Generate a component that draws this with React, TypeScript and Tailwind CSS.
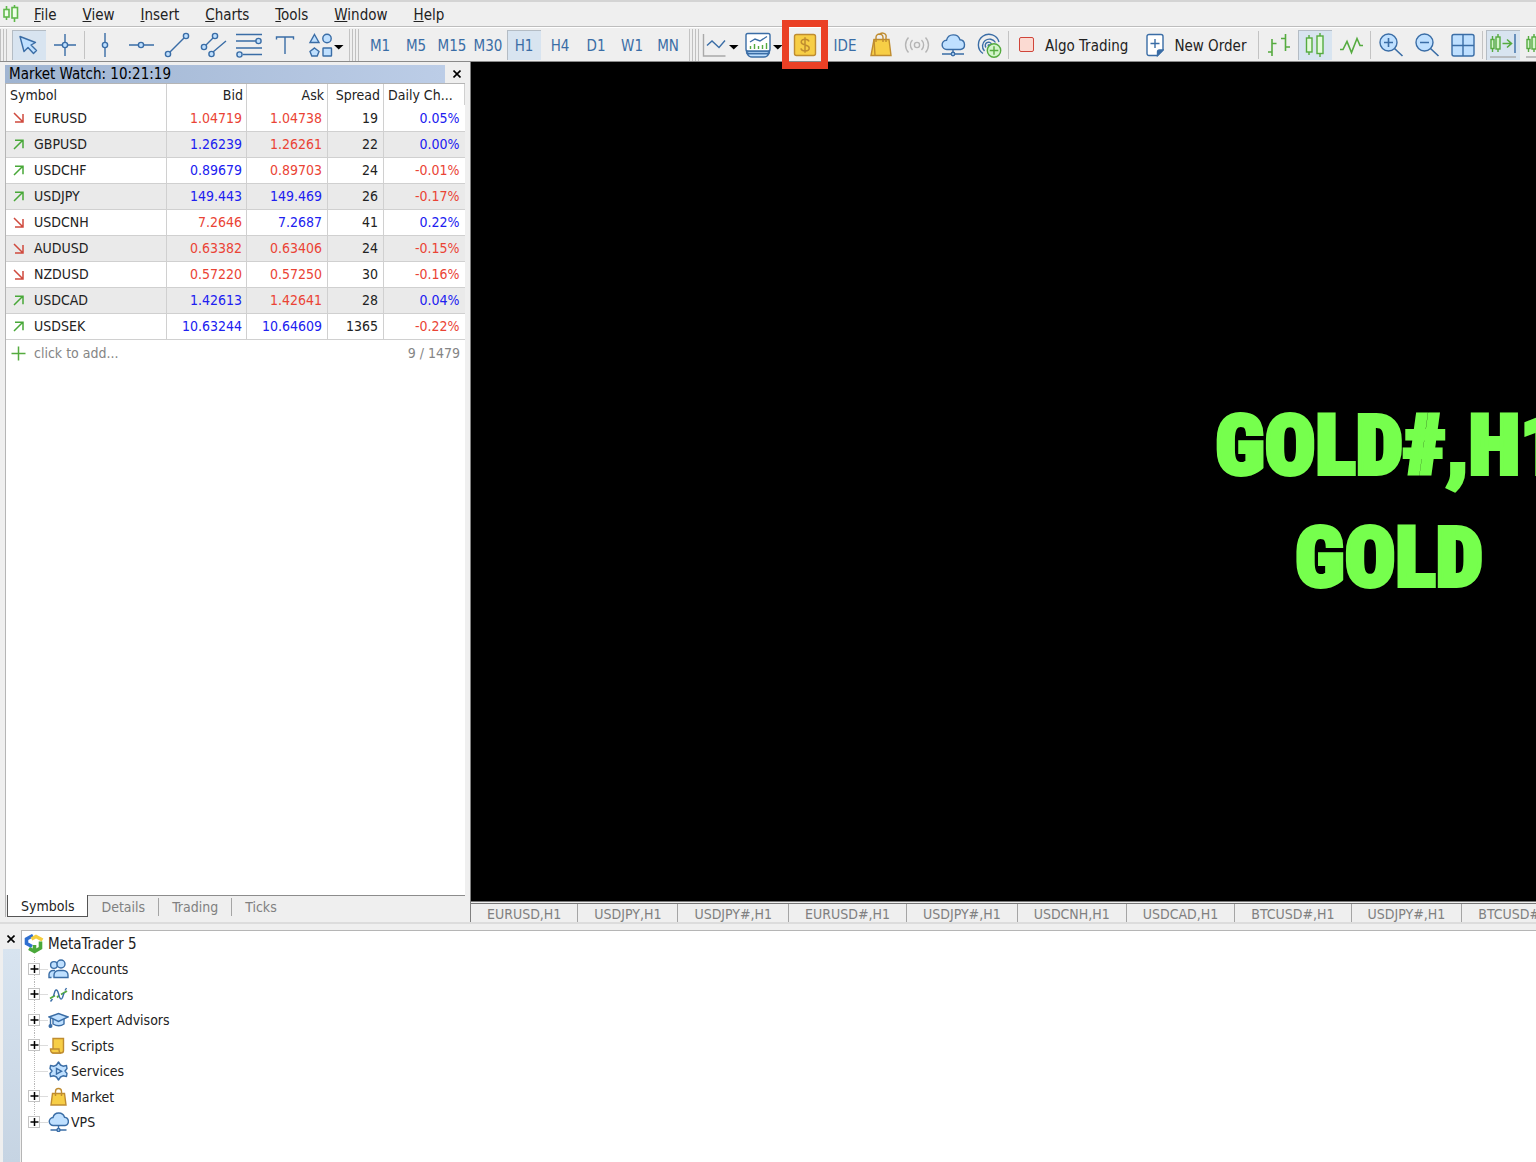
import { Fragment, type ReactNode } from "react";

const BLUE = "#3a6da6";
const SKY = "#bfe0ff";
const GREEN = "#55ab3f";
const MINT = "#d3f5cb";
const GOLD = "#f7ce46";
const BROWN = "#bf8c30";

function Glyph({ children, w = 34, h = 30, stroke = BLUE }: { children: ReactNode; w?: number; h?: number; stroke?: string }) {
  return (
    <svg width={w} height={h} viewBox={`0 0 ${w} ${h}`} fill="none" stroke={stroke} strokeWidth="1.4" className="block shrink-0" aria-hidden="true">
      {children}
    </svg>
  );
}

const Arrow = ({ x }: { x: number }) => <path d={`M${x} 15h9.500l-4.750 4.500z`} fill="#000" stroke="none" />;

function Tool({ label, active, children }: { label: string; active?: boolean; children: ReactNode }) {
  return (
    <button
      type="button"
      aria-label={label}
      className={
        active
          ? "flex h-[30px] min-w-[34px] shrink-0 items-center justify-center bg-[#d8e4f0] shadow-[inset_1px_1px_#b4bcc4]"
          : "flex h-[30px] min-w-[34px] shrink-0 items-center justify-center"
      }
    >
      {children}
    </button>
  );
}

const Sep = () => <span className="mr-px h-7 w-px shrink-0 bg-[#c3c3c3]" />;

const Grip = () => (
  <span className="flex h-8 shrink-0 gap-[2px]">
    <i className="w-px bg-[#c0c0c0]" />
    <i className="w-px bg-[#c0c0c0]" />
    <i className="w-px bg-[#c0c0c0]" />
  </span>
);

const Cursor = () => (
  <Glyph>
    <path d="M8 6.500 12 21.500 16 17.500 21.500 23.500 24.500 20.500 19 15 23.500 12.500Z" fill={SKY} strokeLinejoin="round" />
  </Glyph>
);
const Cross = () => (
  <Glyph>
    <path d="M17 4v8m0 6v8M6 15h8m6 0h8" />
    <circle cx="17" cy="15" r="2.600" fill={SKY} />
  </Glyph>
);
const VLine = () => (
  <Glyph>
    <path d="M17 3v9m0 6v9" />
    <circle cx="17" cy="15" r="2.600" fill={SKY} />
  </Glyph>
);
const HLine = () => (
  <Glyph>
    <path d="M5 15h9m6 0h10" />
    <circle cx="17" cy="15" r="2.600" fill={SKY} />
  </Glyph>
);
const Trend = () => (
  <Glyph>
    <path d="M10 22 24 8" />
    <circle cx="8" cy="24" r="2.600" fill={SKY} />
    <circle cx="26" cy="6" r="2.600" fill={SKY} />
  </Glyph>
);
const Channel = () => (
  <Glyph>
    <path d="M10 15 17 8M17 22 30 11" />
    <circle cx="8" cy="17" r="2.600" fill={SKY} />
    <circle cx="19" cy="6" r="2.600" fill={SKY} />
    <circle cx="15.500" cy="24" r="2.600" fill={SKY} />
  </Glyph>
);
const Fibo = () => (
  <Glyph>
    <path d="M4 4.500h26M4 11h20M4 18h26M11 24.500h19" />
    <circle cx="26.500" cy="11" r="2.600" fill={SKY} />
    <circle cx="7.500" cy="24.500" r="2.600" fill={SKY} />
  </Glyph>
);
const TextT = () => (
  <Glyph>
    <path d="M8.500 9.500V7h17v2.500M17 7v17" />
  </Glyph>
);
const Shapes = () => (
  <Glyph w={42}>
    <g fill={SKY}>
      <path d="M10.500 4.500 15 12.500H6Z" />
      <circle cx="23" cy="8.500" r="4.200" />
      <path d="M10.500 18 15 21.500 13.200 26H7.800L6 21.500Z" />
      <rect x="19" y="18" width="8.500" height="8" rx="0.500" />
    </g>
    <Arrow x={30} />
  </Glyph>
);
const LineMenu = () => (
  <Glyph w={40}>
    <path d="M1.500 4v22h22" stroke="#a9a9a9" />
    <path d="M5 15.500 10 11l7 6.500 6-7" />
    <Arrow x={27} />
  </Glyph>
);
const IndicatorMenu = () => (
  <Glyph w={38}>
    <path d="M3 23.500c1 2 3 3.500 5 3.500h12c2 0 4-1.500 5-3.500z" fill={SKY} />
    <path d="M2.500 21c0 1.500 1 2.500 2.500 2.500h18c1.500 0 2.500-1 2.500-2.500z" fill={SKY} />
    <rect x="2" y="3.500" width="24" height="17.500" rx="1.800" fill="#fff" />
    <path d="m6 12 5-3 5 2 7-4.500" />
    <path d="M6.500 16v3m4-5v5m4-3v3m4-4v4m4-6v6" stroke={GREEN} />
    <Arrow x={29} />
  </Glyph>
);
const Dollar = () => (
  <Glyph stroke={BROWN}>
    <rect x="6.500" y="4.500" width="21" height="21" rx="2" fill={GOLD} />
    <path d="M21 11.500c-.5-1.500-2-2.300-4-2.300s-3.800 1-3.800 2.800c0 4 8 2 8 6 0 2-1.800 3-4.100 3s-3.800-1-4.200-2.700M17 7.200v15.600" strokeWidth="1.500" />
  </Glyph>
);
const Bag = () => (
  <Glyph stroke={BROWN}>
    <path d="M10 9.500h15l2 16H7z" fill={GOLD} />
    <path d="M12 12V7.500a3.500 3.500 0 0 1 7 0V12M15.500 5a3.500 3.500 0 0 1 6.500 2.500V12M10 9.500 11 25.500" />
  </Glyph>
);
const Signal = () => (
  <Glyph stroke="#b5b5b5">
    <circle cx="17" cy="15" r="2.600" />
    <path d="M12.500 10a7 7 0 0 0 0 10M21.500 10a7 7 0 0 1 0 10M8.500 7.500a11 11 0 0 0 0 15M25.500 7.500a11 11 0 0 1 0 15" />
  </Glyph>
);
const Cloud = () => (
  <Glyph>
    <path d="M11 19.500a4.600 4.600 0 0 1-.5-9.200 7 7 0 0 1 13.500-.5 4.900 4.900 0 0 1 .5 9.700z" fill={SKY} />
    <path d="M17 19.500v3M6 24h9m4 0h9" />
    <circle cx="17" cy="24" r="1.700" fill={SKY} />
  </Glyph>
);
const Radar = () => (
  <Glyph>
    <path d="M11 23.500A10.500 10.500 0 1 1 27 12M12.500 21A7 7 0 1 1 23.500 12.500M14 17.500a3.200 3.200 0 1 1 5.500-3" />
    <circle cx="17" cy="15.500" r="0.800" />
    <g stroke={GREEN}>
      <circle cx="22" cy="20.500" r="6.700" fill={MINT} />
      <path d="M22 16.200v8.600M17.700 20.500h8.600" />
    </g>
  </Glyph>
);
const Bars = () => (
  <Glyph stroke={GREEN}>
    <path d="M10 9v17M6 22h4m0-8.500h4.500M23.500 4v17M19 8.500h4.500m0 8.500H28" strokeWidth="1.600" />
  </Glyph>
);
const Candles = () => (
  <Glyph stroke={GREEN}>
    <path d="M11 5v20M22 3v24" />
    <rect x="8.500" y="8" width="5.500" height="14" fill="#e4fbdc" />
    <rect x="19" y="6" width="6" height="17.500" fill="#e4fbdc" />
  </Glyph>
);
const Zig = () => (
  <Glyph stroke={GREEN}>
    <path d="M6 19.500h3l4-8 4.500 11 5.500-14 3 7h3" strokeWidth="1.600" />
  </Glyph>
);
const Zoom = ({ plus }: { plus?: boolean }) => (
  <Glyph>
    <circle cx="14.500" cy="12.500" r="8.500" fill={SKY} />
    <path d={plus ? "M10 12.500h9M14.500 8v9M20.500 18.500l8 7.500" : "M10 12.500h9M20.500 18.500l8 7.500"} strokeWidth="1.600" />
  </Glyph>
);
const Tile = () => (
  <Glyph>
    <rect x="6" y="4.500" width="22" height="21.500" rx="2" fill={SKY} />
    <path d="M17 4.500V26M6 15.500h22" />
  </Glyph>
);
const Scroll = () => (
  <Glyph stroke={GREEN}>
    <path d="M6.500 6v16M12 4v18" />
    <rect x="5" y="9.500" width="3" height="9" fill={MINT} />
    <rect x="10" y="7" width="4" height="12" fill={MINT} />
    <path d="M16.500 13.500H25m-4-4 4.500 4-4.500 4" strokeWidth="1.600" />
    <path d="M29 4v19" stroke={BLUE} />
    <path d="M4 27h26" stroke="#a9a9a9" />
  </Glyph>
);
const NewOrderIcon = () => (
  <Glyph w={18}>
    <path d="M3 4.500h12a2 2 0 0 1 2 2V20l-5.500 5.500H3a2 2 0 0 1-2-2v-17a2 2 0 0 1 2-2z" fill="#fff" />
    <path d="M17 20h-3.500a2 2 0 0 0-2 2v3.500z" fill={BLUE} />
    <path d="M4.500 13.500h9M9 9v9" />
  </Glyph>
);

const menus = ["File", "View", "Insert", "Charts", "Tools", "Window", "Help"];
const frames = ["M1", "M5", "M15", "M30", "H1", "H4", "D1", "W1", "MN"];

type Tone = "r" | "b";
const quotes: { s: string; up: boolean; bid: string; bt: Tone; ask: string; at: Tone; sp: string; ch: string }[] = [
  { s: "EURUSD", up: false, bid: "1.04719", bt: "r", ask: "1.04738", at: "r", sp: "19", ch: "0.05%" },
  { s: "GBPUSD", up: true, bid: "1.26239", bt: "b", ask: "1.26261", at: "r", sp: "22", ch: "0.00%" },
  { s: "USDCHF", up: true, bid: "0.89679", bt: "b", ask: "0.89703", at: "r", sp: "24", ch: "-0.01%" },
  { s: "USDJPY", up: true, bid: "149.443", bt: "b", ask: "149.469", at: "b", sp: "26", ch: "-0.17%" },
  { s: "USDCNH", up: false, bid: "7.2646", bt: "r", ask: "7.2687", at: "b", sp: "41", ch: "0.22%" },
  { s: "AUDUSD", up: false, bid: "0.63382", bt: "r", ask: "0.63406", at: "r", sp: "24", ch: "-0.15%" },
  { s: "NZDUSD", up: false, bid: "0.57220", bt: "r", ask: "0.57250", at: "r", sp: "30", ch: "-0.16%" },
  { s: "USDCAD", up: true, bid: "1.42613", bt: "b", ask: "1.42641", at: "r", sp: "28", ch: "0.04%" },
  { s: "USDSEK", up: true, bid: "10.63244", bt: "b", ask: "10.64609", at: "b", sp: "1365", ch: "-0.22%" },
];
const tone = (t: Tone) => (t === "r" ? "text-[#ea4335]" : "text-[#2020f0]");

const charts = ["EURUSD,H1", "USDJPY,H1", "USDJPY#,H1", "EURUSD#,H1", "USDJPY#,H1", "USDCNH,H1", "USDCAD,H1", "BTCUSD#,H1", "USDJPY#,H1", "BTCUSD#,H1"];

const tree: { name: string; leaf?: boolean; icon: ReactNode }[] = [
  {
    name: "Accounts",
    icon: (
      <g fill={SKY}>
        <circle cx="6" cy="6" r="3.400" />
        <path d="M1 18.500v-3a4 4 0 0 1 4-4h5v7z" stroke="none" />
        <path d="M3.500 18.500H1v-3a4 4 0 0 1 4-4h2" />
        <circle cx="13" cy="5" r="4" />
        <path d="M6 18.500v-2.500a4.500 4.500 0 0 1 4.500-4.500h5a4.500 4.500 0 0 1 4.500 4.500v2.500z" />
      </g>
    ),
  },
  {
    name: "Indicators",
    icon: (
      <>
        <path d="M2 13.500 7 10.500M9 12.500l2-2M13 9.500l6-3.500" stroke={GREEN} strokeWidth="1.800" />
        <path d="M2.500 16.500 4.500 14M5.500 11 7 6q1.500-2.500 3 1l1.500 5q1.500 4 3 .5L16 8M17 5.500l1.500-2.500" />
      </>
    ),
  },
  {
    name: "Expert Advisors",
    icon: (
      <>
        <path d="M5 8v6q6 3.500 11 0V8z" fill={SKY} />
        <path d="M1 7 10.500 3.500 20 7l-9.500 4.500z" fill={SKY} />
        <path d="M2.500 8v7" />
        <circle cx="2.500" cy="16" r="1.300" fill={BLUE} />
      </>
    ),
  },
  {
    name: "Scripts",
    icon: (
      <g stroke={BROWN} fill={GOLD}>
        <path d="M5 2.500h10.500v12q0 2.500-2.500 2.500H5z" />
        <path d="M2.500 13h8.500q0 4 2 4h-7.500q-3 0-3-4z" />
      </g>
    ),
  },
  {
    name: "Services",
    leaf: true,
    icon: (
      <>
        <path d="M8.500 4 10.500 1l2 3 2.500 1.200L18.500 4.500l.5 3-2 2.500 2 2.500-.5 3-3.500-.7-2.500 1.200-2 3-2-3-2.500-1.200-3.500.7-.5-3 2-2.500-2-2.500.5-3 3.500.7z" fill={SKY} strokeLinejoin="round" />
        <path d="M8.500 7.500v5.500l5-2.800z" />
      </>
    ),
  },
  {
    name: "Market",
    icon: (
      <g stroke={BROWN}>
        <path d="M4.500 6.500h12l1.500 11.500H3z" fill={GOLD} />
        <path d="M7.500 9V4.500a3 3 0 0 1 6 0V9" />
      </g>
    ),
  },
  {
    name: "VPS",
    icon: (
      <>
        <path d="M5.500 13.500a4 4 0 0 1-.5-8 6 6 0 0 1 11.500-.3 4.200 4.200 0 0 1 .5 8.300z" fill={SKY} />
        <path d="M10.500 13.500v3M2.500 18h6.500m3 0h6.500" />
        <circle cx="10.500" cy="18" r="1.500" fill={SKY} />
      </>
    ),
  },
];

const CloseIcon = () => (
  <svg width="8" height="8" viewBox="0 0 8 8" stroke="#000" strokeWidth="1.600" aria-hidden="true">
    <path d="m.5.5 7 7m0-7-7 7" />
  </svg>
);

export default function App() {
  return (
    <div className="flex min-h-screen flex-col overflow-x-clip bg-[#efefef] font-['DejaVu_Sans_Condensed','Noto_Sans',sans-serif] text-[14px] leading-5 text-[#222]">
      <header className="flex h-[27px] items-center border-t-2 border-b border-t-[#d4d4d4] border-b-[#bdbdbd] pl-[2px]">
        <svg width="18" height="20" viewBox="0 0 18 20" fill="#efffe9" stroke="#5fb84a" strokeWidth="1.600" aria-hidden="true">
          <path d="M4.500 2v14M12.500 1v17" />
          <rect x="2" y="5.500" width="5" height="7.500" />
          <rect x="10" y="3.500" width="5.500" height="10.500" />
        </svg>
        <nav className="flex pt-[2px] pl-px text-[15px]">
          {menus.map((m) => (
            <button key={m} type="button" className="px-[13px]">
              <span className="underline">{m[0]}</span>
              {m.slice(1)}
            </button>
          ))}
        </nav>
      </header>

      <div className="flex h-[35px] items-center border-t border-b border-t-white border-b-[#8a8a8a] text-[15px] text-[#3a6da6]">
        <Grip />
        <div className="ml-[5px] flex items-center gap-[2px]">
          <Tool label="Cursor" active><Cursor /></Tool>
          <Tool label="Crosshair"><Cross /></Tool>
          <Sep />
          <Tool label="Vertical line"><VLine /></Tool>
          <Tool label="Horizontal line"><HLine /></Tool>
          <Tool label="Trend line"><Trend /></Tool>
          <Tool label="Equidistant channel"><Channel /></Tool>
          <Tool label="Fibonacci retracement"><Fibo /></Tool>
          <Tool label="Text"><TextT /></Tool>
          <Tool label="Shapes"><Shapes /></Tool>
        </div>
        <span className="ml-[3px] h-8 w-px shrink-0 bg-[#c3c3c3]" />
        <span className="ml-[2px]"><Grip /></span>
        <div className="ml-1 flex items-center gap-[2px]">
          {frames.map((f) => (
            <Tool key={f} label={f} active={f === "H1"}>
              <span className="w-[34px] pt-[2px] text-center whitespace-nowrap">{f}</span>
            </Tool>
          ))}
        </div>
        <span className="ml-1 h-8 w-px shrink-0 bg-[#c3c3c3]" />
        <span className="ml-[2px]"><Grip /></span>
        <div className="ml-[3px] flex items-center gap-[2px]">
          <Tool label="Chart type"><LineMenu /></Tool>
          <Tool label="Indicators"><IndicatorMenu /></Tool>
          <span className="relative mx-1">
            <Tool label="Trading"><Dollar /></Tool>
            <span className="pointer-events-none absolute -inset-x-[6px] -top-[10px] -bottom-[9px] z-10 border-[7px] border-[#ea4025]" />
          </span>
          <Tool label="IDE"><span className="pt-[2px]">IDE</span></Tool>
          <Tool label="Market"><Bag /></Tool>
          <Tool label="Signals"><Signal /></Tool>
          <Tool label="VPS"><Cloud /></Tool>
          <Tool label="Copy signals"><Radar /></Tool>
          <Sep />
        </div>
        <div className="flex shrink-0 items-center text-[#222]">
          <button type="button" className="ml-[9px] flex items-center gap-[11px] whitespace-nowrap">
            <span className="size-[15px] rounded-[2px] border border-[#d0453a] bg-[#fbdad2]" />
            <span className="pt-[2px]">Algo Trading</span>
          </button>
          <button type="button" className="ml-[18px] mr-3 flex items-center gap-[10px] whitespace-nowrap">
            <NewOrderIcon />
            <span className="pt-[2px]">New Order</span>
          </button>
        </div>
        <div className="flex items-center gap-[2px]">
          <Sep />
          <Tool label="Bar chart"><Bars /></Tool>
          <Tool label="Candlesticks" active><Candles /></Tool>
          <Tool label="Line chart"><Zig /></Tool>
          <Sep />
          <Tool label="Zoom in"><Zoom plus /></Tool>
          <Tool label="Zoom out"><Zoom /></Tool>
          <Tool label="Tile windows"><Tile /></Tool>
          <Sep />
          <Tool label="Auto scroll" active><Scroll /></Tool>
          <Tool label="Chart shift"><Scroll /></Tool>
        </div>
      </div>

      <main className="flex min-w-0 flex-1 border-b-2 border-[#dcdcdc]">
        <section className="mr-[5px] flex w-[465px] shrink-0 flex-col pt-[3px] pb-[5px] pl-[5px]">
          <div className="flex h-[18px] items-center text-black">
            <h2 className="flex-1 bg-gradient-to-r from-[#9fb4d1] to-[#bccde7] pl-1 text-[15px] leading-[18px]">Market Watch: 10:21:19</h2>
            <button type="button" aria-label="Close Market Watch" className="flex w-5 justify-center pl-1">
              <CloseIcon />
            </button>
          </div>
          <div className="flex flex-1 flex-col border-t border-l border-[#b5b5b5] bg-white">
            <table className="w-full table-fixed border-collapse">
              <colgroup>
                <col />
                <col className="w-20" />
                <col className="w-[81px]" />
                <col className="w-14" />
                <col className="w-[81px]" />
              </colgroup>
              <thead>
                <tr className="h-[21px]">
                  <th className="border-r border-[#d0d0d0] pl-1 text-left font-normal">Symbol</th>
                  <th className="border-r border-[#d0d0d0] pr-[3px] text-right font-normal">Bid</th>
                  <th className="border-r border-[#d0d0d0] pr-[3px] text-right font-normal">Ask</th>
                  <th className="border-r border-[#d0d0d0] pr-[3px] text-right font-normal">Spread</th>
                  <th className="border-r border-[#d0d0d0] pl-1 text-left font-normal whitespace-nowrap">Daily Ch...</th>
                </tr>
              </thead>
              <tbody>
                {quotes.map((q) => (
                  <tr key={q.s} className="h-[26px] border-b border-[#d0d0d0] even:bg-[#eaeaea]">
                    <td className="border-r border-[#d0d0d0]">
                      <span className="flex items-center gap-[10px] pl-[7px]">
                        <svg width="11" height="11" viewBox="0 0 11 11" fill="none" strokeWidth="1.500" stroke={q.up ? "#48a838" : "#cf4a3e"} aria-hidden="true">
                          <path d={q.up ? "M1 10 9.500 1.500M2 1.200h8v8" : "M1 1l8.500 8.500M10 2v8H2"} />
                        </svg>
                        {q.s}
                      </span>
                    </td>
                    <td className={`border-r border-[#d0d0d0] pr-1 text-right ${tone(q.bt)}`}>{q.bid}</td>
                    <td className={`border-r border-[#d0d0d0] pr-[5px] text-right ${tone(q.at)}`}>{q.ask}</td>
                    <td className="border-r border-[#d0d0d0] pr-[5px] text-right">{q.sp}</td>
                    <td className={`pr-[5px] text-right ${tone(q.ch[0] === "-" ? "r" : "b")}`}>{q.ch}</td>
                  </tr>
                ))}
              </tbody>
            </table>
            <div className="flex h-[27px] items-center pr-[5px] pl-[5px] text-[#858585]">
              <button type="button" className="flex items-center gap-2">
                <svg width="15" height="15" viewBox="0 0 15 15" stroke={GREEN} strokeWidth="1.500" aria-hidden="true">
                  <path d="M7.500.5v14M.5 7.500h14" />
                </svg>
                click to add...
              </button>
              <span className="ml-auto">9 / 1479</span>
            </div>
          </div>
          <div className="flex h-[22px] border-l border-[#b5b5b5] pl-px text-[#808080]">
            <button type="button" className="border border-t-0 border-[#555] bg-white px-[13px] text-[#222]">Symbols</button>
            <div className="flex flex-1 items-center border-t border-[#8c8c8c]">
              {["Details", "Trading", "Ticks"].map((t, i) => (
                <Fragment key={t}>
                  {i > 0 && <span className="h-[18px] w-px bg-[#a5a5a5]" />}
                  <button type="button" className="px-[13px]">{t}</button>
                </Fragment>
              ))}
            </div>
          </div>
        </section>

        <section className="flex min-w-0 flex-1 flex-col border-l border-[#808080]">
          <div className="flex flex-1 items-center overflow-hidden bg-black">
            <div className="w-[1836px] shrink-0 pt-10 text-center font-['Impact','Liberation_Sans_Narrow','Roboto_Condensed','Open_Sans_Condensed',sans-serif] text-[84px] leading-[112px] font-black text-[#76ff4d] [-webkit-text-stroke:4px_#76ff4d]">
              <p>GOLD#,H1</p>
              <p>GOLD</p>
            </div>
          </div>
          <nav className="flex h-[21px] items-center overflow-hidden border-t-3 border-double border-[#777] text-[#808080]">
            {charts.map((c, i) => (
              <Fragment key={i}>
                {i > 0 && <span className="h-[18px] w-px shrink-0 bg-[#a5a5a5]" />}
                <button type="button" className="shrink-0 px-4 pt-[2px]">{c}</button>
              </Fragment>
            ))}
          </nav>
        </section>
      </main>

      <section className="flex pt-[6px]">
        <div className="flex w-[21px] shrink-0 flex-col pl-[3px]">
          <button type="button" aria-label="Close Navigator" className="flex h-[19px] items-center pb-[2px] pl-1">
            <CloseIcon />
          </button>
          <div className="mr-px flex-1 bg-gradient-to-b from-[#d8e4f0] to-[#c6d4e3]" />
        </div>
        <div className="flex-1 border-t border-l border-[#b5b5b5] bg-white pb-[27px]">
          <ul className="grid h-[204px] grid-rows-8">
            <li className="flex items-center gap-1 pl-[2px] text-[15px]">
              <svg width="20" height="20" viewBox="0 0 20 20" fill="none" strokeWidth="3.600" aria-hidden="true">
                <path d="M9 1.500 2.500 5v4.500L8 12.500" stroke="#2f6fd0" />
                <path d="M7.500 5 12 2.500 18.500 6" stroke="#f5ce3e" />
                <path d="M5 14.500 10.500 17.500 16.500 14V7.500M10.500 17.500V11" stroke="#4aa83a" />
              </svg>
              MetaTrader 5
            </li>
            {tree.map((n, i) => (
              <li key={n.name} className="flex items-center">
                <span className="flex self-stretch pl-[6px]">
                  <svg width="20" height="26" viewBox="0 0 20 26" fill="none" aria-hidden="true">
                    <path d={i === tree.length - 1 ? "M6.500 0v12M6.500 12.500h13" : "M6.500 0v26M6.500 12.500h13"} stroke="#b8b8b8" strokeDasharray="1 1" />
                    {!n.leaf && (
                      <>
                        <rect x="0.500" y="6.500" width="11" height="11" fill="#fff" stroke="#c4c4c4" />
                        <path d="M2.500 12h8M6.500 8v8" stroke="#000" strokeWidth="1.500" />
                      </>
                    )}
                  </svg>
                </span>
                <button type="button" className="flex items-center gap-[2px]">
                  <Glyph w={21} h={20}>{n.icon}</Glyph>
                  {n.name}
                </button>
              </li>
            ))}
          </ul>
        </div>
      </section>
    </div>
  );
}
